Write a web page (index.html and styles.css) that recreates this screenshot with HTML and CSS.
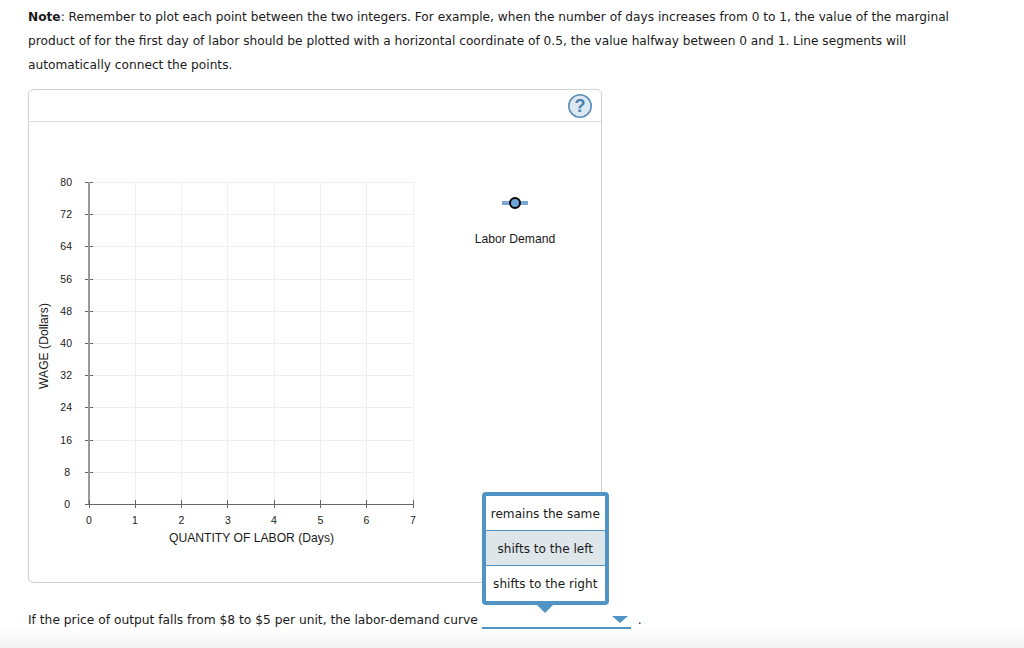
FILE: index.html
```html
<!DOCTYPE html>
<html lang="en">
<head>
<meta charset="utf-8">
<title>Labor Demand</title>
<link rel="stylesheet" href="styles.css">
</head>
<body>
<p class="note"><b>Note</b>: Remember to plot each point between the two integers. For example, when the number of days increases from 0 to 1, the value of the marginal product of for the first day of labor should be plotted with a horizontal coordinate of 0.5, the value halfway between 0 and 1. Line segments will automatically connect the points.</p>

<div class="panel">
    <div class="panel-head">
        <svg class="help" width="26" height="26" viewBox="0 0 26 26">
            <circle cx="13" cy="13" r="11.2" fill="#dce8f2" stroke="#5b8fb9" stroke-width="1.6"/>
            <text x="13" y="19" text-anchor="middle" class="help-mark">?</text>
        </svg>
    </div>
    <div class="panel-body">
        <svg class="chart" width="440" height="461" viewBox="29 122 440 461">
            <path class="grid" d="M135.5 182V504M181.5 182V504M227.5 182V504M274.5 182V504M320.5 182V504M366.5 182V504M413.5 182V504M89 182.5H413M89 214.5H413M89 246.5H413M89 279.5H413M89 311.5H413M89 343.5H413M89 375.5H413M89 407.5H413M89 440.5H413M89 472.5H413"/>
            <path class="tick" d="M85 182.5H93M85 214.5H93M85 246.5H93M85 279.5H93M85 311.5H93M85 343.5H93M85 375.5H93M85 407.5H93M85 440.5H93M85 472.5H93"/>
            <path class="axis-y" d="M89 182V504"/>
            <path class="tick" d="M85 504.5H413.5M89.5 500V508M135.5 500V508M181.5 500V508M227.5 500V508M274.5 500V508M320.5 500V508M366.5 500V508M413.5 500V508"/>
            <g class="num end">
                <text x="72" y="186">80</text>
                <text x="72" y="218">72</text>
                <text x="72" y="250">64</text>
                <text x="72" y="283">56</text>
                <text x="72" y="315">48</text>
                <text x="72" y="347">40</text>
                <text x="72" y="379">32</text>
                <text x="72" y="411">24</text>
                <text x="72" y="444">16</text>
                <text x="70" y="476">8</text>
                <text x="70" y="508">0</text>
            </g>
            <g class="num mid">
                <text x="89" y="524">0</text>
                <text x="135" y="524">1</text>
                <text x="181.5" y="524">2</text>
                <text x="228" y="524">3</text>
                <text x="274" y="524">4</text>
                <text x="320.5" y="524">5</text>
                <text x="366.5" y="524">6</text>
                <text x="413" y="524">7</text>
            </g>
            <text class="axis-title" x="251.5" y="542" text-anchor="middle">QUANTITY OF LABOR (Days)</text>
            <text class="axis-title" transform="translate(48 346) rotate(-90)" text-anchor="middle">WAGE (Dollars)</text>
        </svg>
        <div class="legend">
            <svg width="28" height="14" viewBox="0 0 28 14">
                <path d="M1 7H27" stroke="#7ba7d3" stroke-width="4"/>
                <circle cx="14" cy="7" r="5" fill="#6fa3d8" stroke="#000" stroke-width="2"/>
            </svg>
            <div class="legend-label">Labor Demand</div>
        </div>
    </div>
</div>

<div class="question">
    <span>If the price of output falls from $8 to $5 per unit, the labor-demand curve</span>
    <div class="dropdown">
        <span class="caret"></span>
        <ul class="menu">
            <li>remains the same</li>
            <li class="active">shifts to the left</li>
            <li>shifts to the right</li>
        </ul>
    </div>
    <span class="stop">.</span>
</div>
</body>
</html>
```

FILE: styles.css
```css
* {
    margin: 0;
    padding: 0;
    box-sizing: border-box;
}

html {
    height: 648px;
    overflow: hidden;
}

body {
    height: 648px;
    padding: 5px 28px 0;
    font-family: "DejaVu Sans", sans-serif;
    font-size: 12.18px;
    color: #1a1a1a;
    background: linear-gradient(to bottom, #fff 628px, #f1f1f1 648px);
}

.note {
    width: 930px;
    line-height: 24px;
}

.panel {
    width: 574px;
    height: 494px;
    margin-top: 12px;
    border: 1px solid #d2d2d2;
    border-radius: 5px;
    background: #fff;
}

.panel-head {
    display: flex;
    justify-content: flex-end;
    align-items: center;
    height: 32px;
    padding-right: 8px;
    border-bottom: 1px solid #dcdcdc;
}

.help {
    display: block;
}

.help-mark {
    font-family: "Liberation Sans", sans-serif;
    font-size: 18px;
    font-weight: 700;
    fill: #4a80ad;
}

.panel-body {
    display: flex;
}

.chart {
    display: block;
    flex: none;
}

.grid {
    fill: none;
    stroke: #efefef;
    stroke-width: 1;
}

.tick {
    fill: none;
    stroke: #666;
    stroke-width: 1;
}

.axis-y {
    fill: none;
    stroke: #999;
    stroke-width: 2;
}

.num text {
    font-family: "Liberation Sans", sans-serif;
    font-size: 10.5px;
    fill: #1a1a1a;
}

.end text {
    text-anchor: end;
}

.mid text {
    text-anchor: middle;
}

.axis-title {
    font-family: "Liberation Sans", sans-serif;
    font-size: 12.15px;
    fill: #1a1a1a;
}

.legend {
    display: flex;
    flex-direction: column;
    align-items: center;
    width: 92px;
    margin-left: 0;
    padding-top: 74px;
}

.legend svg {
    display: block;
}

.legend-label {
    margin-top: 22px;
    font-family: "Liberation Sans", sans-serif;
    font-size: 12.15px;
    white-space: nowrap;
}

.question {
    display: flex;
    align-items: flex-end;
    margin-top: 24px;
    line-height: 26px;
    font-size: 12.25px;
}

.dropdown {
    position: relative;
    width: 149px;
    height: 21px;
    margin-left: 4px;
    margin-bottom: 4px;
    border-bottom: 2px solid #4f94c4;
}

.caret {
    position: absolute;
    top: 8px;
    right: 3px;
    border-style: solid;
    border-width: 7px 8px 0;
    border-color: #4f94c4 transparent transparent;
}

.menu {
    position: absolute;
    left: 0;
    bottom: 22px;
    width: 127px;
    border: 4px solid #4f94c4;
    border-radius: 4px;
    background: #fff;
    font-size: 12.1px;
    list-style: none;
    text-align: center;
    white-space: nowrap;
}

.menu::after {
    content: "";
    position: absolute;
    left: 50%;
    bottom: -12px;
    margin-left: -8px;
    border-style: solid;
    border-width: 8px 8px 0;
    border-color: #4f94c4 transparent transparent;
}

.menu li {
    height: 35px;
    line-height: 37px;
    border-bottom: 1px solid #4f94c4;
}

.menu li:last-child {
    border-bottom: none;
}

.menu .active {
    background: #dee6ea;
}

.stop {
    margin-left: 7px;
}
```
